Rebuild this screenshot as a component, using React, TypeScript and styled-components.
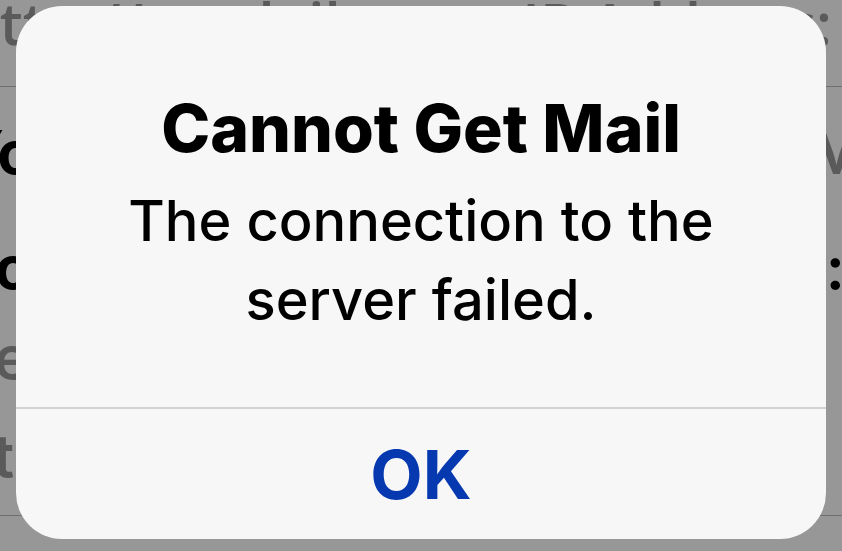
import React from 'react'
import styled, { createGlobalStyle } from 'styled-components'

const GlobalStyle = createGlobalStyle`
  html, body {
    margin: 0;
    padding: 0;
    background: #979797;
  }
  body {
    font-family: Inter, "Noto Sans", sans-serif;
  }
`

type Tone = 'gray' | 'black'

function App() {
  return (
    <>
      <GlobalStyle />
      <Screen>
        <Backdrop>
          <UrlRow>http://osxdaily.com IP Address:</UrlRow>
          <Separator />
          <ListRow $height={130}>
            <RowText $tone="black" $bold>You</RowText>
            <RowText $tone="gray">9:41 AM</RowText>
          </ListRow>
          <ListRow $height={100}>
            <RowText $tone="black" $bold>ac</RowText>
            <RowText $tone="black">:.</RowText>
          </ListRow>
          <ListRow $height={80}>
            <RowText $tone="gray">ve</RowText>
            <RowText $tone="gray"> </RowText>
          </ListRow>
          <ListRow $height={118}>
            <RowText $tone="gray">st</RowText>
            <RowText $tone="gray">:</RowText>
          </ListRow>
          <Separator />
        </Backdrop>

        <Alert role="alertdialog">
          <AlertBody>
            <Title>Cannot Get Mail</Title>
            <Message>
              The connection to the
              <br />
              server failed.
            </Message>
          </AlertBody>
          <Divider />
          <ActionButton type="button">OK</ActionButton>
        </Alert>
      </Screen>
    </>
  )
}

export default App

const Screen = styled.div`
  position: relative;
  width: 842px;
  height: 551px;
  overflow: hidden;
  background: #979797;
`

const Backdrop = styled.div`
  display: flex;
  flex-direction: column;
  width: 842px;
`

const UrlRow = styled.div`
  display: flex;
  justify-content: flex-end;
  height: 86px;
  padding-right: 10px;
  overflow: hidden;
  white-space: nowrap;
  font-family: "Open Sans", sans-serif;
  font-size: 58px;
  font-weight: 600;
  line-height: 46px;
  color: #5a5a5a;
`

const Separator = styled.div`
  height: 1px;
  background: #6f6f6f;
`

const ListRow = styled.div<{ $height: number }>`
  display: flex;
  justify-content: space-between;
  align-items: center;
  height: ${(p) => p.$height}px;
  margin: 0 -22px 0 -40px;
  overflow: hidden;
`

const RowText = styled.span<{ $tone: Tone; $bold?: boolean }>`
  font-size: 60px;
  font-weight: ${(p) => (p.$bold ? 700 : 600)};
  color: ${(p) => (p.$tone === 'black' ? '#000' : '#5a5a5a')};
  white-space: pre;
`

const Alert = styled.div`
  position: absolute;
  top: 6px;
  left: 16px;
  width: 810px;
  height: 533px;
  display: flex;
  flex-direction: column;
  border-radius: 46px;
  overflow: hidden;
  background: #f7f7f8;
`

const AlertBody = styled.div`
  display: flex;
  flex-direction: column;
  align-items: center;
  padding: 82px 30px 67px;
  text-align: center;
`

const Title = styled.h1`
  margin: 0 0 14px;
  font-size: 66px;
  line-height: 80px;
  font-weight: 800;
  color: #000;
`

const Message = styled.p`
  margin: 0;
  font-size: 56px;
  line-height: 79px;
  font-weight: 500;
  color: #000;
`

const Divider = styled.div`
  height: 2px;
  background: #d2d2d4;
`

const ActionButton = styled.button`
  flex: 1;
  display: flex;
  align-items: center;
  justify-content: center;
  border: 0;
  background: transparent;
  font-family: Inter, "Noto Sans", sans-serif;
  font-size: 68px;
  font-weight: 700;
  color: #0638b0;
  cursor: pointer;
`
